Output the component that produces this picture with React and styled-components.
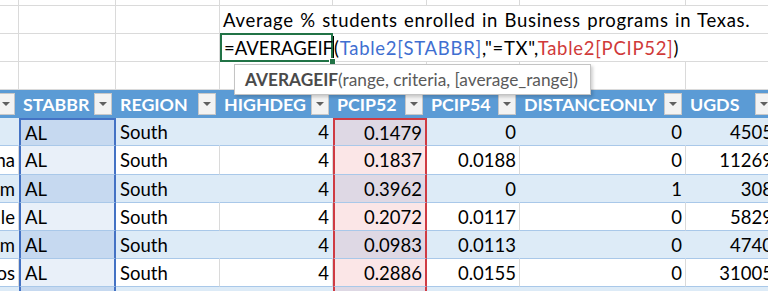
import React from 'react'
import styled, { createGlobalStyle, css } from 'styled-components'

const COLS = '19px 97px 104px 113px 94px 93px 166px 91px'

const rows = [
    { tail: '', st: 'AL', region: 'South', hd: 4, p52: '0.1479', p54: '0', dist: 0, ugds: '4505' },
    { tail: 'ha', st: 'AL', region: 'South', hd: 4, p52: '0.1837', p54: '0.0188', dist: 0, ugds: '11269' },
    { tail: 'm', st: 'AL', region: 'South', hd: 4, p52: '0.3962', p54: '0', dist: 1, ugds: '308' },
    { tail: 'le', st: 'AL', region: 'South', hd: 4, p52: '0.2072', p54: '0.0117', dist: 0, ugds: '5829' },
    { tail: 'm', st: 'AL', region: 'South', hd: 4, p52: '0.0983', p54: '0.0113', dist: 0, ugds: '4740' },
    { tail: 'os', st: 'AL', region: 'South', hd: 4, p52: '0.2886', p54: '0.0155', dist: 0, ugds: '31005' },
    { tail: '', st: '', region: '', hd: '', p52: '', p54: '', dist: '', ugds: '' },
]

const headers = ['', 'STABBR', 'REGION', 'HIGHDEG', 'PCIP52', 'PCIP54', 'DISTANCEONLY', 'UGDS']

function App() {
    return (
        <>
            <GlobalStyle />
            <Sheet>
                <TopGrid>
                    {Array.from({ length: 8 }).map((_, i) => <GridCell key={'a' + i} />)}
                    <GridCell /><GridCell /><GridCell />
                    <SpanCell>
                        <Title>Average % students enrolled in Business programs in Texas.</Title>
                    </SpanCell>
                    <GridCell /><GridCell /><GridCell />
                    <SpanCell>
                        <ActiveCell>
                            =AVERAGEIF<Cursor />
                            <Args>
                                (<Ref color="#3f6fd1">Table2[STABBR]</Ref>,"=TX",<Ref color="#d03a3a">Table2[PCIP52]</Ref>)
                            </Args>
                            <Handle />
                        </ActiveCell>
                    </SpanCell>
                    {Array.from({ length: 8 }).map((_, i) => <GridCell key={'b' + i} />)}
                </TopGrid>

                <HeaderRow>
                    {headers.map((h, i) => (
                        <HeaderCell key={i}>
                            <span>{h}</span>
                            <FilterButton />
                        </HeaderCell>
                    ))}
                </HeaderRow>

                {rows.map((r, i) => {
                    const band = i % 2 === 0
                    return (
                        <DataRow key={i} tall={i === 1}>
                            <Cell band={band} right>{r.tail}</Cell>
                            <Cell band={band} pick="blue" first={i === 0}>{r.st}</Cell>
                            <Cell band={band}>{r.region}</Cell>
                            <Cell band={band} right>{r.hd}</Cell>
                            <Cell band={band} right pick="red" first={i === 0}>{r.p52}</Cell>
                            <Cell band={band} right>{r.p54}</Cell>
                            <Cell band={band} right>{r.dist}</Cell>
                            <Cell band={band} right>{r.ugds}</Cell>
                        </DataRow>
                    )
                })}

                <Tooltip>
                    <b>AVERAGEIF</b>(range, criteria, [average_range])
                </Tooltip>
            </Sheet>
        </>
    )
}

export default App

const GlobalStyle = createGlobalStyle`
    html, body {
        margin: 0;
        padding: 0;
        background: #fff;
        overflow: hidden;
    }
    * { box-sizing: border-box; }
`

const Sheet = styled.div`
    position: relative;
    width: 768px;
    height: 291px;
    overflow: hidden;
    background: #fff;
    font-family: Lato, "Liberation Sans", sans-serif;
    font-size: 18.5px;
    color: #000;
`

const TopGrid = styled.div`
    display: grid;
    grid-template-columns: ${COLS};
    grid-template-rows: 6px 28px 28px 28px;
`

const GridCell = styled.div`
    border-right: 1px solid #dadada;
    border-bottom: 1px solid #dadada;
`

const SpanCell = styled.div`
    grid-column: 4 / -1;
    border-bottom: 1px solid #dadada;
    display: flex;
    align-items: center;
    padding-left: 3px;
    white-space: nowrap;
`

const Title = styled.span`
    letter-spacing: 0.7px;
    word-spacing: 1px;
`

const ActiveCell = styled.div`
    position: relative;
    align-self: stretch;
    width: 113px;
    margin: -1px 0 -1px -3px;
    padding-left: 2px;
    border: 2px solid #217346;
    display: flex;
    align-items: center;
    white-space: nowrap;
    overflow: visible;
`

const Args = styled.span`
    letter-spacing: 0.72px;
`

const Cursor = styled.span`
    display: inline-block;
    width: 0;
    height: 24px;
    border-left: 1px solid #000;
`

const Ref = styled.span`
    color: ${p => p.color};
`

const Handle = styled.span`
    position: absolute;
    right: -5px;
    bottom: -5px;
    width: 7px;
    height: 7px;
    background: #217346;
    border: 1px solid #fff;
`

const HeaderRow = styled.div`
    display: grid;
    grid-template-columns: ${COLS};
    height: 28px;
    background: #5b9bd5;
`

const HeaderCell = styled.div`
    position: relative;
    display: flex;
    align-items: center;
    padding-left: 4px;
    color: #fff;
    font-size: 17.8px;
    font-weight: 700;
    white-space: nowrap;
    overflow: hidden;
`

const FilterButton = styled.span`
    position: absolute;
    right: 4px;
    top: 3px;
    width: 18px;
    height: 22px;
    background: #f3f3f3;
    border: 1px solid #c8c8c8;
    &::after {
        content: '';
        position: absolute;
        left: 4px;
        top: 8px;
        border-left: 4px solid transparent;
        border-right: 4px solid transparent;
        border-top: 4px solid #606060;
    }
`

const DataRow = styled.div`
    display: grid;
    grid-template-columns: ${COLS};
    height: ${p => (p.tall ? '29px' : '28px')};
`

const picks = {
    blue: { band: '#c6d9f0', plain: '#e9f0f9', line: '#4472c4' },
    red: { band: '#ded8e4', plain: '#fbe6e7', line: '#cf3b43' },
}

const Cell = styled.div`
    display: flex;
    align-items: center;
    justify-content: ${p => (p.right ? 'flex-end' : 'flex-start')};
    padding: 0 3px 0 4px;
    white-space: nowrap;
    overflow: hidden;
    background: ${p => (p.band ? '#ddebf7' : '#fff')};
    border-bottom: 1px solid #a9c8e9;
    border-right: 1px solid ${p => (p.band ? '#ddebf7' : '#dadada')};
    ${p => p.pick && css`
        background: ${p.band ? picks[p.pick].band : picks[p.pick].plain};
        border-left: 2px solid ${picks[p.pick].line};
        border-right: 2px solid ${picks[p.pick].line};
        ${p.first && css`border-top: 2px solid ${picks[p.pick].line};`}
    `}
`

const Tooltip = styled.div`
    position: absolute;
    left: 234px;
    top: 64px;
    width: 357px;
    height: 31px;
    padding-left: 10px;
    display: flex;
    align-items: center;
    background: #fff;
    border: 1px solid #c4c4c4;
    box-shadow: 2px 2px 3px rgba(0, 0, 0, 0.18);
    color: #5a5a5a;
    font-size: 17.3px;
    white-space: nowrap;
    b {
        color: #4a4a4a;
        font-weight: 700;
    }
`
